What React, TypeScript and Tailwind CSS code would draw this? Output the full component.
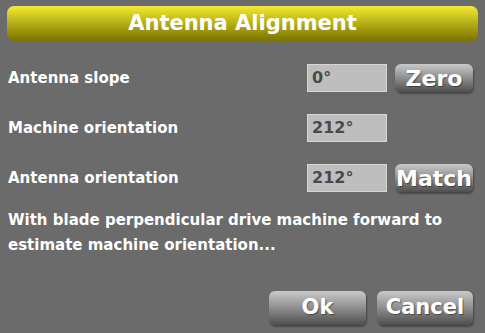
import React from "react";

const font = { fontFamily: '"DejaVu Sans", "Liberation Sans", sans-serif' };

function GlossButton({ label, className }: { label: string; className: string }) {
  return (
    <button
      className={`flex items-center justify-center rounded-[6px] bg-gradient-to-b from-[#cacaca] via-[#8e8e8e] to-[#4f4f4f] font-bold text-white shadow-[1px_2px_2px_rgba(0,0,0,0.35)] [text-shadow:1px_1px_1px_rgba(0,0,0,0.4)] ${className}`}
    >
      {label}
    </button>
  );
}

function ValueBox({ value }: { value: string }) {
  return (
    <div className="flex h-[28px] w-[80px] items-center border border-[#d6d6d6] bg-[#bebebe] pl-[4px] text-[16px] font-bold text-[#4a4a4a]">
      {value}
    </div>
  );
}

export default function App() {
  return (
    <div className="flex h-[333px] w-[485px] flex-col bg-[#6b6b6b] text-white" style={font}>
      <div className="mx-[7px] mt-[6px] flex h-[35px] items-center justify-center rounded-[7px] bg-gradient-to-b from-[#f4ec30] to-[#7a7300] text-[21px] font-bold">
        Antenna Alignment
      </div>

      <div className="mt-[23px] flex flex-col gap-[22px] pl-[8px] pr-[12px]">
        <div className="flex h-[28px] items-center">
          <span className="flex-1 text-[15px] font-bold">Antenna slope</span>
          <ValueBox value="0°" />
          <GlossButton label="Zero" className="ml-[8px] h-[28px] w-[78px] text-[22px]" />
        </div>
        <div className="flex h-[28px] items-center">
          <span className="flex-1 text-[15px] font-bold">Machine orientation</span>
          <ValueBox value="212°" />
          <div className="ml-[8px] w-[78px]" />
        </div>
        <div className="flex h-[28px] items-center">
          <span className="flex-1 text-[15px] font-bold">Antenna orientation</span>
          <ValueBox value="212°" />
          <GlossButton label="Match" className="ml-[8px] h-[28px] w-[78px] text-[22px]" />
        </div>
      </div>

      <p className="mt-[16px] pl-[8px] pr-[20px] text-[15px] font-bold leading-[25px]">
        With blade perpendicular drive machine forward to estimate machine orientation...
      </p>

      <div className="mt-auto mb-[8px] flex justify-end gap-[11px] pr-[12px]">
        <GlossButton label="Ok" className="h-[34px] w-[97px] text-[21px]" />
        <GlossButton label="Cancel" className="h-[34px] w-[96px] text-[21px]" />
      </div>
    </div>
  );
}
